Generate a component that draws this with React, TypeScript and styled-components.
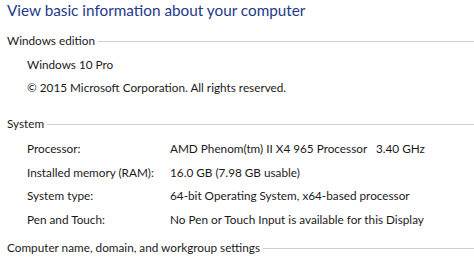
import React from 'react';
import styled, { createGlobalStyle } from 'styled-components';

const GlobalStyle = createGlobalStyle`
  html, body {
    margin: 0;
    padding: 0;
    background: #ffffff;
  }
  body {
    font-family: Lato, "Noto Sans", sans-serif;
    color: #1a1a1a;
  }
`;

const specs = [
  { label: 'Processor:', value: 'AMD Phenom(tm) II X4 965 Processor   3.40 GHz' },
  { label: 'Installed memory (RAM):', value: '16.0 GB (7.98 GB usable)' },
  { label: 'System type:', value: '64-bit Operating System, x64-based processor' },
  { label: 'Pen and Touch:', value: 'No Pen or Touch Input is available for this Display' },
];

export default function App() {
  return (
    <Page>
      <GlobalStyle />
      <Title>View basic information about your computer</Title>

      <Section>
        <SectionHeader>
          <span>Windows edition</span>
          <Rule />
        </SectionHeader>
        <Body>
          <Line>Windows 10 Pro</Line>
          <Line>© 2015 Microsoft Corporation. All rights reserved.</Line>
        </Body>
      </Section>

      <Section $gap={20}>
        <SectionHeader>
          <span>System</span>
          <Rule />
        </SectionHeader>
        <SpecGrid>
          {specs.map((s) => (
            <React.Fragment key={s.label}>
              <SpecLabel>{s.label}</SpecLabel>
              <SpecValue>{s.value}</SpecValue>
            </React.Fragment>
          ))}
        </SpecGrid>
      </Section>

      <Section $gap={12}>
        <SectionHeader>
          <span>Computer name, domain, and workgroup settings</span>
          <Rule />
        </SectionHeader>
      </Section>
    </Page>
  );
}

const Page = styled.div`
  width: 474px;
  height: 259px;
  overflow: hidden;
  padding: 0 0 0 7px;
  box-sizing: border-box;
`;

const Title = styled.h1`
  margin: 0;
  font-size: 15.3px;
  line-height: 20px;
  font-weight: 400;
  color: #1e3a8a;
  white-space: nowrap;
`;

const Section = styled.section<{ $gap?: number }>`
  margin-top: ${(p) => p.$gap ?? 13}px;
`;

const SectionHeader = styled.div`
  display: flex;
  align-items: center;
  gap: 3px;
  font-size: 11.75px;
  line-height: 16px;
  white-space: nowrap;
`;

const Rule = styled.div`
  flex: 1;
  height: 1px;
  margin-top: 1px;
  background: #d0d0d0;
`;

const Body = styled.div`
  padding: 8px 0 0 20px;
  display: flex;
  flex-direction: column;
  gap: 7px;
  font-size: 11.75px;
  line-height: 16px;
`;

const Line = styled.div`
  white-space: nowrap;
`;

const SpecGrid = styled.div`
  display: grid;
  grid-template-columns: 143px 1fr;
  row-gap: 7.5px;
  padding: 9px 0 0 20px;
  font-size: 11.75px;
  line-height: 16px;
`;

const SpecLabel = styled.div`
  white-space: nowrap;
`;

const SpecValue = styled.div`
  white-space: pre;
`;
